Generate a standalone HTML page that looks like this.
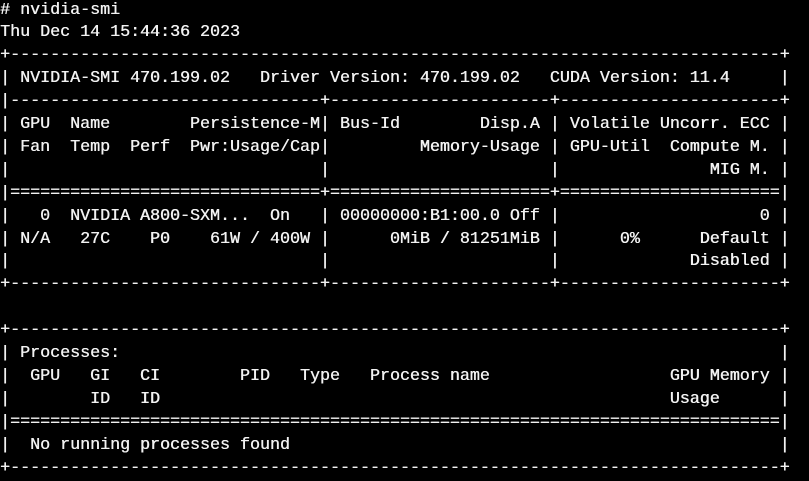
<!DOCTYPE html>
<html><head><meta charset="utf-8">
<style>
html,body{margin:0;padding:0;background:#000;width:809px;height:479px;overflow:hidden}
pre{margin:0;position:absolute;left:0;top:-0.5px;font-family:"Liberation Mono","DejaVu Sans Mono",monospace;font-size:16.67px;line-height:22.9px;color:#f2f2f2;white-space:pre;text-shadow:0.4px 0 0 #f2f2f2}
</style></head><body>
<pre># nvidia-smi
Thu Dec 14 15:44:36 2023
+-----------------------------------------------------------------------------+
| NVIDIA-SMI 470.199.02   Driver Version: 470.199.02   CUDA Version: 11.4     |
|-------------------------------+----------------------+----------------------+
| GPU  Name        Persistence-M| Bus-Id        Disp.A | Volatile Uncorr. ECC |
| Fan  Temp  Perf  Pwr:Usage/Cap|         Memory-Usage | GPU-Util  Compute M. |
|                               |                      |               MIG M. |
|===============================+======================+======================|
|   0  NVIDIA A800-SXM...  On   | 00000000:B1:00.0 Off |                    0 |
| N/A   27C    P0    61W / 400W |      0MiB / 81251MiB |      0%      Default |
|                               |                      |             Disabled |
+-------------------------------+----------------------+----------------------+
                                                                               
+-----------------------------------------------------------------------------+
| Processes:                                                                  |
|  GPU   GI   CI        PID   Type   Process name                  GPU Memory |
|        ID   ID                                                   Usage      |
|=============================================================================|
|  No running processes found                                                 |
+-----------------------------------------------------------------------------+</pre>
</body></html>
